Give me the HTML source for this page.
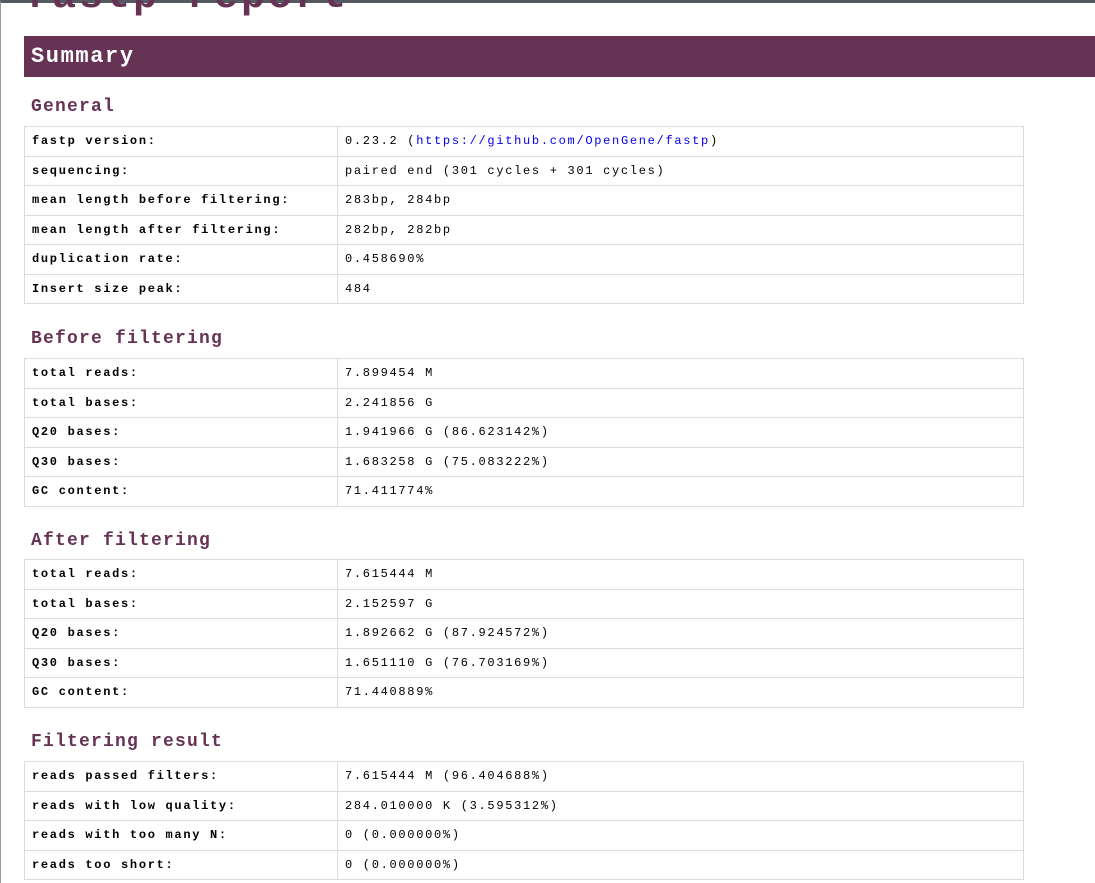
<!DOCTYPE html>
<html><head><meta charset="utf-8"><style>
html,body{margin:0;padding:0;background:#fff;}
body{width:1095px;height:883px;overflow:hidden;position:relative;font-family:"Liberation Mono","Courier New",monospace;border-top:3px solid #555a60;box-sizing:border-box;border-left:1px solid #999;}
.title{position:absolute;left:24px;top:-28px;font-size:40px;font-weight:bold;color:#663355;letter-spacing:3px;white-space:nowrap;}
.bar{position:absolute;left:23px;top:33px;width:1072px;height:41px;background:#663355;color:#fff;font-size:22px;font-weight:bold;letter-spacing:1.6px;line-height:41px;padding-left:7px;box-sizing:border-box;}
.h{position:absolute;left:30px;font-size:18px;font-weight:bold;color:#663355;letter-spacing:1.2px;line-height:20px;}
table{position:absolute;left:23px;width:1000px;border-collapse:collapse;}
td{border:1px solid #dcdcdc;height:29.5px;padding:0 0 0 7px;font-size:12px;letter-spacing:1.7px;color:#000;white-space:nowrap;box-sizing:border-box;}
td.l{width:313px;font-weight:bold;}
a{color:#0000ee;}
</style></head><body>
<div class="title">fastp report</div>
<div class="bar">Summary</div>

<div class="h" style="top:94px">General</div>
<table style="top:123px">
<tr><td class="l">fastp version:</td><td>0.23.2 (<a>https://github.com/OpenGene/fastp</a>)</td></tr>
<tr><td class="l">sequencing:</td><td>paired end (301 cycles + 301 cycles)</td></tr>
<tr><td class="l">mean length before filtering:</td><td>283bp, 284bp</td></tr>
<tr><td class="l">mean length after filtering:</td><td>282bp, 282bp</td></tr>
<tr><td class="l">duplication rate:</td><td>0.458690%</td></tr>
<tr><td class="l">Insert size peak:</td><td>484</td></tr>
</table>

<div class="h" style="top:326px">Before filtering</div>
<table style="top:355px">
<tr><td class="l">total reads:</td><td>7.899454 M</td></tr>
<tr><td class="l">total bases:</td><td>2.241856 G</td></tr>
<tr><td class="l">Q20 bases:</td><td>1.941966 G (86.623142%)</td></tr>
<tr><td class="l">Q30 bases:</td><td>1.683258 G (75.083222%)</td></tr>
<tr><td class="l">GC content:</td><td>71.411774%</td></tr>
</table>

<div class="h" style="top:528px">After filtering</div>
<table style="top:556px">
<tr><td class="l">total reads:</td><td>7.615444 M</td></tr>
<tr><td class="l">total bases:</td><td>2.152597 G</td></tr>
<tr><td class="l">Q20 bases:</td><td>1.892662 G (87.924572%)</td></tr>
<tr><td class="l">Q30 bases:</td><td>1.651110 G (76.703169%)</td></tr>
<tr><td class="l">GC content:</td><td>71.440889%</td></tr>
</table>

<div class="h" style="top:729px">Filtering result</div>
<table style="top:758px">
<tr><td class="l">reads passed filters:</td><td>7.615444 M (96.404688%)</td></tr>
<tr><td class="l">reads with low quality:</td><td>284.010000 K (3.595312%)</td></tr>
<tr><td class="l">reads with too many N:</td><td>0 (0.000000%)</td></tr>
<tr><td class="l">reads too short:</td><td>0 (0.000000%)</td></tr>
</table>
</body></html>
